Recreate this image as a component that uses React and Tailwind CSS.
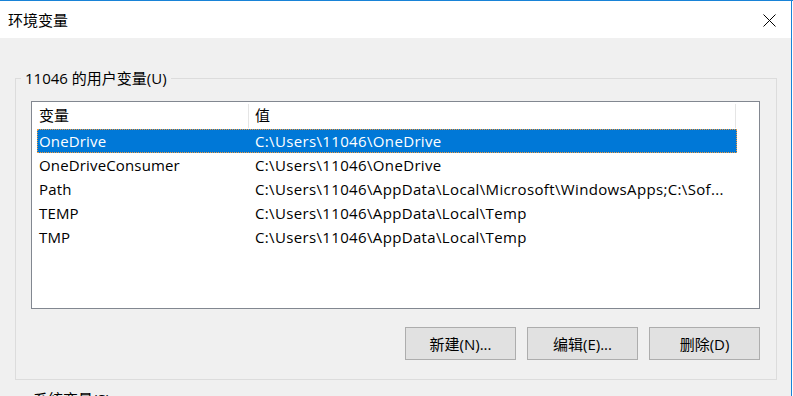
const rows = [
  { name: 'OneDrive', value: 'C:\\Users\\11046\\OneDrive', selected: true },
  { name: 'OneDriveConsumer', value: 'C:\\Users\\11046\\OneDrive' },
  { name: 'Path', value: 'C:\\Users\\11046\\AppData\\Local\\Microsoft\\WindowsApps;C:\\Sof...' },
  { name: 'TEMP', value: 'C:\\Users\\11046\\AppData\\Local\\Temp' },
  { name: 'TMP', value: 'C:\\Users\\11046\\AppData\\Local\\Temp' },
]

const buttons = ['新建(N)...', '编辑(E)...', '删除(D)']

export default function App() {
  return (
    <div
      className="w-[793px] h-[396px] overflow-hidden bg-[#f0f0f0] border-t border-t-[#1883d7] text-[15px] text-black"
      style={{ fontFamily: '"Open Sans", "Noto Sans CJK SC", sans-serif' }}
    >
      <div className="flex h-full">
        <div className="flex-1 flex flex-col">
          {/* title bar */}
          <div className="shrink-0 h-[37px] bg-white flex items-center justify-between pl-2 pr-[15px]">
            <span className="leading-5">环境变量</span>
            <svg width="13" height="13" viewBox="0 0 13 13" className="mt-[1px]">
              <path d="M0.5 0.5 L12.5 12.5 M12.5 0.5 L0.5 12.5" stroke="#000" strokeWidth="1" fill="none" />
            </svg>
          </div>

          {/* user variables group */}
          <fieldset className="shrink-0 ml-[15px] mt-[30px] w-[762px] border border-[#dcdcdc] pb-[19px]">
            <legend className="ml-[5px] px-[4px] leading-5">11046 的用户变量(U)</legend>

            <div className="ml-[15px] mt-[13px] w-[729px] h-[208px] border border-[#828790] bg-white">
              <div className="flex h-[27px] items-center">
                <div className="w-[217px] h-[24px] pl-[7px] flex items-center border-r border-[#e5e5e5]">变量</div>
                <div className="w-[487px] h-[24px] pl-[6px] flex items-center border-r border-[#e5e5e5]">值</div>
              </div>
              <div className="pl-[5px] w-[705px]">
                {rows.map((r) => (
                  <div
                    key={r.name}
                    className={
                      r.selected
                        ? 'flex h-[24px] items-center bg-[#0078d7] text-white outline-1 outline-dotted outline-[#f29a3c] -outline-offset-1'
                        : 'flex h-[24px] items-center'
                    }
                  >
                    <div className="w-[212px] pl-[2px] whitespace-nowrap tracking-[0.15px]">{r.name}</div>
                    <div className="pl-[6px] whitespace-nowrap tracking-[0.35px]">{r.value}</div>
                  </div>
                ))}
              </div>
            </div>

            <div className="flex justify-end gap-[11px] mt-[18px] mr-[16px]">
              {buttons.map((b) => (
                <button
                  key={b}
                  className="w-[111px] h-[33px] bg-[#e1e1e1] border border-[#adadad] flex items-center justify-center leading-5"
                >
                  {b}
                </button>
              ))}
            </div>
          </fieldset>

          {/* system variables group, cut off */}
          <div className="shrink-0 pl-[33px] mt-[9px] leading-5">系统变量(S)</div>
        </div>
        <div className="w-[1px] bg-[#1883d7]" />
        <div className="w-[1px] bg-white" />
      </div>
    </div>
  )
}
